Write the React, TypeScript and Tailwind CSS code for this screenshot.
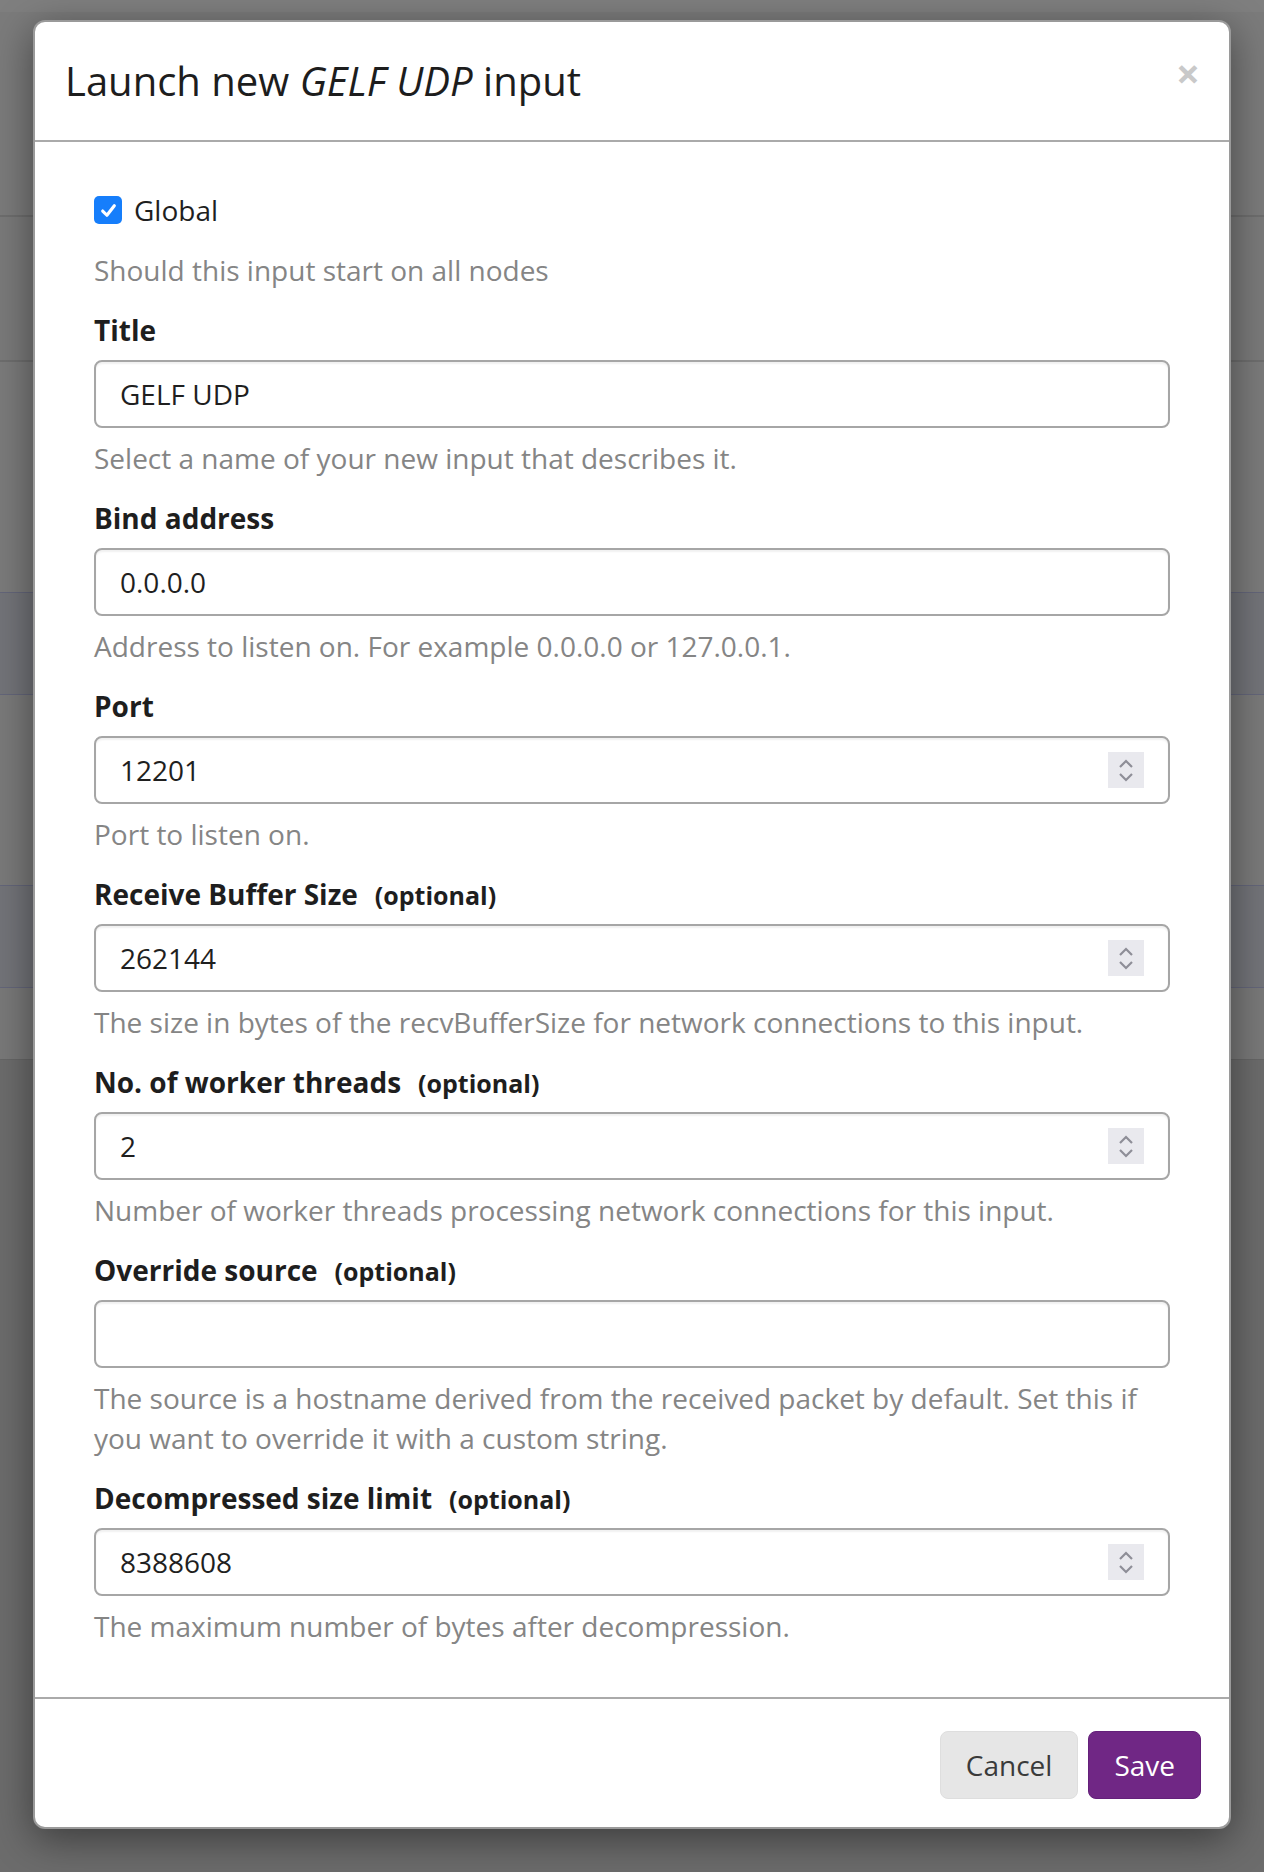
import React from "react";

interface Field {
  label: string;
  optional?: boolean;
  value: string;
  number?: boolean;
  help: string;
}

const fields: Field[] = [
  {
    label: "Title",
    value: "GELF UDP",
    help: "Select a name of your new input that describes it.",
  },
  {
    label: "Bind address",
    value: "0.0.0.0",
    help: "Address to listen on. For example 0.0.0.0 or 127.0.0.1.",
  },
  { label: "Port", value: "12201", number: true, help: "Port to listen on." },
  {
    label: "Receive Buffer Size",
    optional: true,
    value: "262144",
    number: true,
    help: "The size in bytes of the recvBufferSize for network connections to this input.",
  },
  {
    label: "No. of worker threads",
    optional: true,
    value: "2",
    number: true,
    help: "Number of worker threads processing network connections for this input.",
  },
  {
    label: "Override source",
    optional: true,
    value: "",
    help: "The source is a hostname derived from the received packet by default. Set this if you want to override it with a custom string.",
  },
  {
    label: "Decompressed size limit",
    optional: true,
    value: "8388608",
    number: true,
    help: "The maximum number of bytes after decompression.",
  },
];

function Spinner() {
  return (
    <div className="w-[36px] h-[36px] bg-[#e9e9ee] flex flex-col items-center justify-center gap-[3px]">
      <svg width="16" height="10" viewBox="0 0 16 10" fill="none">
        <path d="M2 8 L8 2 L14 8" stroke="#8e8e97" strokeWidth="2.2" />
      </svg>
      <svg width="16" height="10" viewBox="0 0 16 10" fill="none">
        <path d="M2 2 L8 8 L14 2" stroke="#8e8e97" strokeWidth="2.2" />
      </svg>
    </div>
  );
}

function FormField({ field }: { field: Field }) {
  return (
    <div className="flex flex-col">
      <div className="flex items-baseline gap-[17px] h-[40px] leading-[40px]">
        <span className="text-[28px] font-bold text-[#1e1e1e]">{field.label}</span>
        {field.optional && (
          <span className="text-[25px] font-bold text-[#1e1e1e]">(optional)</span>
        )}
      </div>
      <div className="mt-[10px] h-[68px] border-2 border-[#a6a6a6] rounded-[8px] flex items-center justify-between pl-[24px] pr-[24px] shadow-[inset_0_2px_2px_rgba(0,0,0,0.06)]">
        <span className="text-[28px] text-[#1f1f1f]">{field.value}</span>
        {field.number && <Spinner />}
      </div>
      <p className="mt-[10px] mb-[20px] text-[28px] leading-[40px] text-[#858585]">
        {field.help}
      </p>
    </div>
  );
}

export default function App() {
  return (
    <div className="relative w-[1264px] h-[1872px] overflow-hidden bg-[#6c6c6c] font-['Open_Sans',sans-serif] [font-stretch:90%]">
      {/* page behind the overlay */}
      <div className="flex flex-col">
        <div className="h-[12px] bg-[#7f7f7f]" />
        <div className="h-[205px] bg-[#7b7b7b] border-b-2 border-[#6e6e6e]" />
        <div className="h-[145px] bg-[#7a7a7a] border-b-2 border-[#6e6e6e]" />
        <div className="h-[231px] bg-[#7b7b7b] border-b border-[#64667a]" />
        <div className="h-[102px] bg-[#737479] border-b border-[#64667a]" />
        <div className="h-[191px] bg-[#7a7a7a] border-b border-[#64667a]" />
        <div className="h-[102px] bg-[#737479] border-b border-[#64667a]" />
        <div className="h-[72px] bg-[#797979] border-b border-[#666666]" />
      </div>

      {/* modal */}
      <div className="absolute left-[33px] top-[20px] w-[1198px] bg-white rounded-[12px] border-2 border-[#9a9a9a] shadow-[0_10px_40px_rgba(0,0,0,0.45)]">
        <div className="relative h-[120px] px-[30px] flex items-center border-b-2 border-[#aaaaaa]">
          <h4 className="text-[40px] leading-[60px] text-[#1d1d1d] font-normal">
            Launch new <i>GELF UDP</i> input
          </h4>
          <span className="absolute right-[29px] top-[31px] text-[42px] leading-[40px] font-bold text-[#c9c9c9]">
            ×
          </span>
        </div>

        <div className="px-[59px] pt-[48px] pb-[31px]">
          <div className="flex items-center gap-[12px] h-[40px]">
            <div className="w-[28px] h-[28px] rounded-[5px] bg-[#167efb] flex items-center justify-center">
              <svg width="19" height="19" viewBox="0 0 18 18" fill="none">
                <path
                  d="M3.5 9.5 L7.5 13.5 L14.5 4.5"
                  stroke="white"
                  strokeWidth="3"
                  strokeLinecap="round"
                  strokeLinejoin="round"
                />
              </svg>
            </div>
            <span className="text-[28px] text-[#1f1f1f]">Global</span>
          </div>
          <p className="mt-[20px] mb-[20px] text-[28px] leading-[40px] text-[#858585]">
            Should this input start on all nodes
          </p>
          {fields.map((f) => (
            <FormField key={f.label} field={f} />
          ))}
        </div>

        <div className="border-t-2 border-[#aaaaaa] px-[28px] pt-[32px] pb-[28px] flex justify-end gap-[10px]">
          <button className="h-[68px] px-[25px] rounded-[8px] bg-[#e6e6e6] border border-[#dedede] text-[28px] text-[#3a3a3a]">
            Cancel
          </button>
          <button className="h-[68px] px-[25px] rounded-[8px] bg-[#702785] border border-[#64207a] text-[28px] text-white">
            Save
          </button>
        </div>
      </div>
    </div>
  );
}
